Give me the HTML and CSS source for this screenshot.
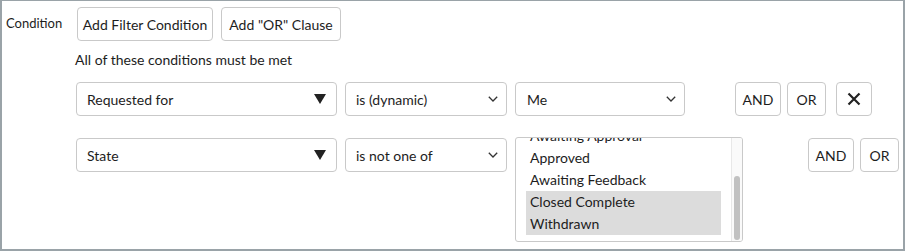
FILE: index.html
```html
<!DOCTYPE html>
<html lang="en">
<head>
  <meta charset="UTF-8" />
  <title>Condition Builder</title>
  <link rel="stylesheet" href="styles.css">
</head>
<body>
  <div class="frame">
    <div class="label">Condition</div>
    <div class="builder">
      <div class="toolbar">
        <button class="btn btn-filter">Add Filter Condition</button>
        <button class="btn btn-or-clause">Add "OR" Clause</button>
      </div>
      <p class="hint">All of these conditions must be met</p>

      <div class="cond-row">
        <div class="field field-name">
          <span>Requested for</span>
          <svg class="tri" width="12" height="10" viewBox="0 0 12 10"><path d="M0 0 H12 L6 10 Z" fill="#222"/></svg>
        </div>
        <div class="field field-op">
          <span>is (dynamic)</span>
          <svg class="chev" width="10" height="6" viewBox="0 0 10 6"><path d="M0.8 0.8 L5 5 L9.2 0.8" fill="none" stroke="#333" stroke-width="1.3"/></svg>
        </div>
        <div class="field field-val">
          <span>Me</span>
          <svg class="chev" width="10" height="6" viewBox="0 0 10 6"><path d="M0.8 0.8 L5 5 L9.2 0.8" fill="none" stroke="#333" stroke-width="1.3"/></svg>
        </div>
        <div class="actions actions-first">
          <button class="btn btn-and">AND</button>
          <button class="btn btn-or">OR</button>
          <button class="btn btn-del">
            <svg width="16" height="16" viewBox="0 0 16 16"><path d="M2.5 2.5 L13.5 13.5 M13.5 2.5 L2.5 13.5" stroke="#222" stroke-width="2.2"/></svg>
          </button>
        </div>
      </div>

      <div class="cond-row cond-row-list">
        <div class="field field-name">
          <span>State</span>
          <svg class="tri" width="12" height="10" viewBox="0 0 12 10"><path d="M0 0 H12 L6 10 Z" fill="#222"/></svg>
        </div>
        <div class="field field-op">
          <span>is not one of</span>
          <svg class="chev" width="10" height="6" viewBox="0 0 10 6"><path d="M0.8 0.8 L5 5 L9.2 0.8" fill="none" stroke="#333" stroke-width="1.3"/></svg>
        </div>
        <div class="listbox">
          <div class="options">
            <div class="opt">Awaiting Approval</div>
            <div class="opt">Approved</div>
            <div class="opt">Awaiting Feedback</div>
            <div class="opt selected">Closed Complete</div>
            <div class="opt selected">Withdrawn</div>
          </div>
          <div class="scrollbar"><div class="thumb"></div></div>
        </div>
        <div class="actions actions-second">
          <button class="btn btn-and">AND</button>
          <button class="btn btn-or">OR</button>
        </div>
      </div>
    </div>
  </div>
</body>
</html>
```

FILE: styles.css
```css
body {
  margin: 0;
  font-family: 'Source Sans Pro', Lato, 'Liberation Sans', sans-serif;
  font-size: 14px;
  color: #1d1d1d;
  background: #fff;
}
.frame {
  box-sizing: border-box;
  width: 905px;
  height: 251px;
  border-top: 1px solid #9aa3a8;
  border-left: 2px solid #9aa3a8;
  border-right: 2px solid #9aa3a8;
  border-bottom: 2px solid #9aa3a8;
  display: flex;
  padding-top: 6px;
}
.label {
  width: 74px;
  padding-left: 4px;
  padding-top: 8px;
  font-size: 13px;
  box-sizing: border-box;
}
.builder {
  flex: 1;
}
.toolbar {
  display: flex;
  gap: 8px;
  margin-left: 1px;
}
.btn {
  font-family: inherit;
  font-size: 14px;
  color: #1d1d1d;
  background: #fff;
  border: 1px solid #c9c9c9;
  border-radius: 4px;
  height: 34px;
  padding: 0;
  box-sizing: border-box;
}
.btn-filter { width: 136px; }
.btn-or-clause { width: 120px; }
.hint {
  margin: 9px 0 0 -1px;
  height: 20px;
  line-height: 20px;
}
.cond-row {
  display: flex;
  align-items: flex-start;
  gap: 8px;
  margin-top: 12px;
}
.cond-row-list {
  margin-top: 21px;
}
.field {
  box-sizing: border-box;
  height: 34px;
  border: 1px solid #c9c9c9;
  border-radius: 4px;
  display: flex;
  align-items: center;
  justify-content: space-between;
  padding: 0 8px 0 10px;
}
.field-name { width: 261px; padding-right: 10px; }
.field-op { width: 162px; }
.field-val { width: 170px; padding-left: 11px; }
.cond-row-list .field { margin-top: 1px; }
.tri, .chev { display: block; }
.actions {
  display: flex;
  gap: 6px;
}
.actions-first { margin-left: 42px; }
.actions-second { margin-left: 57px; margin-top: 1px; }
.btn-and { width: 46px; }
.btn-or { width: 39px; }
.btn-del {
  width: 36px;
  margin-left: 4px;
  display: flex;
  align-items: center;
  justify-content: center;
}
.listbox {
  box-sizing: border-box;
  width: 228px;
  height: 105px;
  border: 1px solid #c9c9c9;
  border-radius: 3px;
  overflow: hidden;
  display: flex;
}
.options {
  flex: 1;
  margin: -13px 10px 0 10px;
}
.opt {
  height: 22px;
  line-height: 22px;
  padding-left: 4px;
}
.opt.selected {
  background: #dcdcdc;
}
.scrollbar {
  width: 10px;
  border-left: 1px solid #e8e8e8;
  background: #fafafa;
  position: relative;
}
.thumb {
  position: absolute;
  left: 2px;
  right: 2px;
  top: 38px;
  bottom: 1px;
  background: #c1c1c1;
  border-radius: 4px;
}
```
